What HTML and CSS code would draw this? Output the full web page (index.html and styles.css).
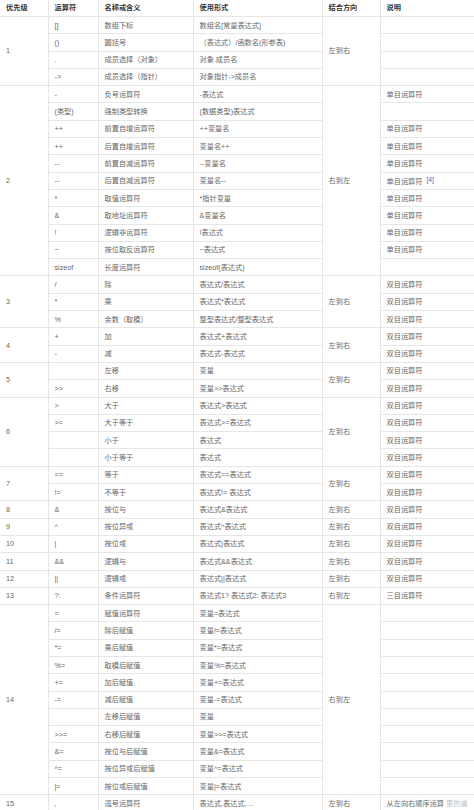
FILE: index.html
```html
<!DOCTYPE html>
<html lang="zh-CN">
<head>
<meta charset="utf-8">
<title>C语言运算符优先级</title>
<link rel="stylesheet" href="styles.css">
</head>
<body>
<table class="ops">
<colgroup>
<col class="c1"><col class="c2"><col class="c3"><col class="c4"><col class="c5"><col class="c6">
</colgroup>
<thead>
<tr><th>优先级</th><th>运算符</th><th>名称或含义</th><th>使用形式</th><th>结合方向</th><th>说明</th></tr>
</thead>
<tbody>
<tr><td rowspan="4">1</td><td>[]</td><td>数组下标</td><td>数组名[常量表达式]</td><td rowspan="4">左到右</td><td></td></tr>
<tr><td>()</td><td>圆括号</td><td>（表达式）/函数名(形参表)</td><td></td></tr>
<tr><td>.</td><td>成员选择（对象）</td><td>对象.成员名</td><td></td></tr>
<tr><td>-&gt;</td><td>成员选择（指针）</td><td>对象指针-&gt;成员名</td><td></td></tr>

<tr><td rowspan="11">2</td><td>-</td><td>负号运算符</td><td>-表达式</td><td rowspan="11">右到左</td><td>单目运算符</td></tr>
<tr><td>(类型)</td><td>强制类型转换</td><td>(数据类型)表达式</td><td></td></tr>
<tr><td>++</td><td>前置自增运算符</td><td>++变量名</td><td>单目运算符</td></tr>
<tr><td>++</td><td>后置自增运算符</td><td>变量名++</td><td>单目运算符</td></tr>
<tr><td>--</td><td>前置自减运算符</td><td>--变量名</td><td>单目运算符</td></tr>
<tr><td>--</td><td>后置自减运算符</td><td>变量名--</td><td>单目运算符 <sup class="ref">[4]</sup></td></tr>
<tr><td>*</td><td>取值运算符</td><td>*指针变量</td><td>单目运算符</td></tr>
<tr><td>&amp;</td><td>取地址运算符</td><td>&amp;变量名</td><td>单目运算符</td></tr>
<tr><td>!</td><td>逻辑非运算符</td><td>!表达式</td><td>单目运算符</td></tr>
<tr><td>~</td><td>按位取反运算符</td><td>~表达式</td><td>单目运算符</td></tr>
<tr><td>sizeof</td><td>长度运算符</td><td>sizeof(表达式)</td><td></td></tr>

<tr><td rowspan="3">3</td><td>/</td><td>除</td><td>表达式/表达式</td><td rowspan="3">左到右</td><td>双目运算符</td></tr>
<tr><td>*</td><td>乘</td><td>表达式*表达式</td><td>双目运算符</td></tr>
<tr><td>%</td><td>余数（取模）</td><td>整型表达式/整型表达式</td><td>双目运算符</td></tr>

<tr><td rowspan="2">4</td><td>+</td><td>加</td><td>表达式+表达式</td><td rowspan="2">左到右</td><td>双目运算符</td></tr>
<tr><td>-</td><td>减</td><td>表达式-表达式</td><td>双目运算符</td></tr>

<tr><td rowspan="2">5</td><td></td><td>左移</td><td>变量</td><td rowspan="2">左到右</td><td>双目运算符</td></tr>
<tr><td>&gt;&gt;</td><td>右移</td><td>变量&gt;&gt;表达式</td><td>双目运算符</td></tr>

<tr><td rowspan="4">6</td><td>&gt;</td><td>大于</td><td>表达式&gt;表达式</td><td rowspan="4">左到右</td><td>双目运算符</td></tr>
<tr><td>&gt;=</td><td>大于等于</td><td>表达式&gt;=表达式</td><td>双目运算符</td></tr>
<tr><td></td><td>小于</td><td>表达式</td><td>双目运算符</td></tr>
<tr><td></td><td>小于等于</td><td>表达式</td><td>双目运算符</td></tr>

<tr><td rowspan="2">7</td><td>==</td><td>等于</td><td>表达式==表达式</td><td rowspan="2">左到右</td><td>双目运算符</td></tr>
<tr><td>!=</td><td>不等于</td><td>表达式!= 表达式</td><td>双目运算符</td></tr>

<tr><td>8</td><td>&amp;</td><td>按位与</td><td>表达式&amp;表达式</td><td>左到右</td><td>双目运算符</td></tr>
<tr><td>9</td><td>^</td><td>按位异或</td><td>表达式^表达式</td><td>左到右</td><td>双目运算符</td></tr>
<tr><td>10</td><td>|</td><td>按位或</td><td>表达式|表达式</td><td>左到右</td><td>双目运算符</td></tr>
<tr><td>11</td><td>&amp;&amp;</td><td>逻辑与</td><td>表达式&amp;&amp;表达式</td><td>左到右</td><td>双目运算符</td></tr>
<tr><td>12</td><td>||</td><td>逻辑或</td><td>表达式||表达式</td><td>左到右</td><td>双目运算符</td></tr>
<tr><td>13</td><td>?:</td><td>条件运算符</td><td>表达式1? 表达式2: 表达式3</td><td>右到左</td><td>三目运算符</td></tr>

<tr><td rowspan="11">14</td><td>=</td><td>赋值运算符</td><td>变量=表达式</td><td rowspan="11">右到左</td><td></td></tr>
<tr><td>/=</td><td>除后赋值</td><td>变量/=表达式</td><td></td></tr>
<tr><td>*=</td><td>乘后赋值</td><td>变量*=表达式</td><td></td></tr>
<tr><td>%=</td><td>取模后赋值</td><td>变量%=表达式</td><td></td></tr>
<tr><td>+=</td><td>加后赋值</td><td>变量+=表达式</td><td></td></tr>
<tr><td>-=</td><td>减后赋值</td><td>变量-=表达式</td><td></td></tr>
<tr><td></td><td>左移后赋值</td><td>变量</td><td></td></tr>
<tr><td>&gt;&gt;=</td><td>右移后赋值</td><td>变量&gt;&gt;=表达式</td><td></td></tr>
<tr><td>&amp;=</td><td>按位与后赋值</td><td>变量&amp;=表达式</td><td></td></tr>
<tr><td>^=</td><td>按位异或后赋值</td><td>变量^=表达式</td><td></td></tr>
<tr><td>|=</td><td>按位或后赋值</td><td>变量|=表达式</td><td></td></tr>

<tr><td>15</td><td>,</td><td>逗号运算符</td><td>表达式,表达式,…</td><td>左到右</td><td>从左向右顺序运算<span class="wm">里的道</span></td></tr>
</tbody>
</table>
</body>
</html>
```

FILE: styles.css
```css
html, body {
  margin: 0;
  padding: 0;
  background: #ffffff;
}
body {
  font-family: "Liberation Sans", "Noto Sans CJK SC", sans-serif;
  font-size: 7.2px;
  color: #666666;
}
.ops {
  border-collapse: collapse;
  border-style: hidden;
  table-layout: fixed;
  width: 474px;
}
.c1 { width: 48px; }
.c2 { width: 50px; }
.c3 { width: 95px; }
.c4 { width: 129px; }
.c5 { width: 58px; }
.c6 { width: 94px; }
.ops th,
.ops td {
  box-sizing: border-box;
  padding: 0 0 0 6px;
  text-align: left;
  vertical-align: middle;
  border: 1px solid #e6e6e6;
  line-height: 1;
  white-space: nowrap;
  overflow: hidden;
}
.ops thead tr {
  height: 16.5px;
}
.ops th {
  color: #333333;
  font-weight: bold;
}
.ops tbody tr {
  height: 17.3px;
}
.ref {
  color: #3366cc;
  font-size: 6.6px;
  vertical-align: 2px;
  margin-left: 2px;
}
.wm {
  color: #c0c0c0;
  margin-left: 2px;
}
```
